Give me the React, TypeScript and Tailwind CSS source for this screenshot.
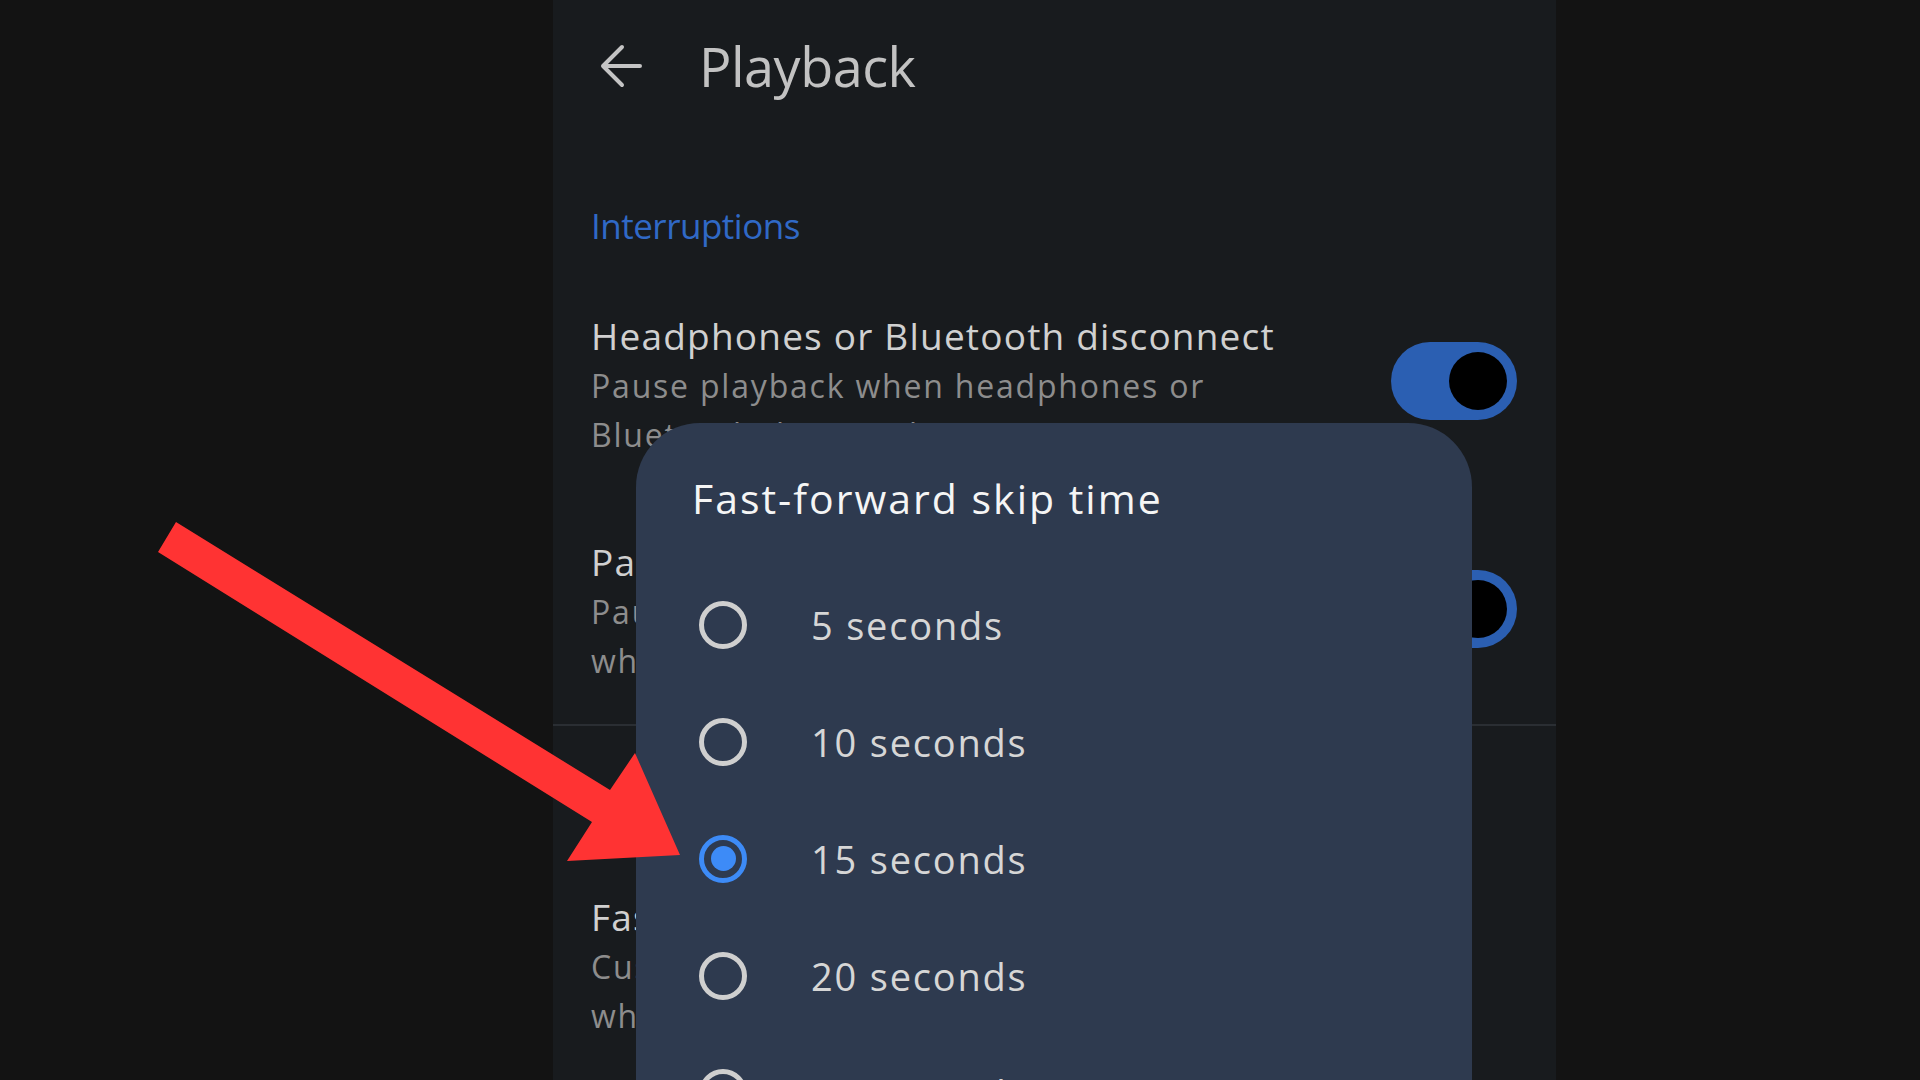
import React from "react";

function Toggle({ mt }: { mt: string }) {
  return (
    <div className={`${mt} shrink-0 w-[126px] h-[78px] rounded-full bg-[#2b5fb2] flex items-center justify-end pr-[10px]`}>
      <div className="w-[58px] h-[58px] rounded-full bg-black" />
    </div>
  );
}

function Setting({
  title,
  lines,
  className,
  toggle,
  toggleMt,
}: {
  title: string;
  lines: string[];
  className: string;
  toggle?: boolean;
  toggleMt?: string;
}) {
  return (
    <div className={`${className} flex justify-between`}>
      <div className="flex flex-col">
        <div className="text-[37px] leading-[50px] text-[#d0d0d0] tracking-[1.2px] whitespace-nowrap">{title}</div>
        {lines.map((l) => (
          <div key={l} className="text-[32px] leading-[49px] text-[#8d8d8d] tracking-[1.8px] whitespace-nowrap">
            {l}
          </div>
        ))}
      </div>
      {toggle ? <Toggle mt={toggleMt ?? "mt-[31px]"} /> : null}
    </div>
  );
}

function Radio({ selected }: { selected?: boolean }) {
  if (selected) {
    return (
      <div className="w-[48px] h-[48px] rounded-full border-[5px] border-[#3d8bf7] flex items-center justify-center shrink-0">
        <div className="w-[25px] h-[25px] rounded-full bg-[#3d8bf7]" />
      </div>
    );
  }
  return <div className="w-[48px] h-[48px] rounded-full border-[5px] border-[#cfcfcf] shrink-0" />;
}

export default function App() {
  const options = [
    { label: "5 seconds", selected: false },
    { label: "10 seconds", selected: false },
    { label: "15 seconds", selected: true },
    { label: "20 seconds", selected: false },
    { label: "30 seconds", selected: false },
  ];
  return (
    <div className="relative w-[1920px] h-[1080px] bg-[#131313] overflow-hidden flex font-['Open_Sans',sans-serif]">
      <div className="w-[553px] shrink-0" />
      <div className="relative w-[1003px] h-full shrink-0 bg-[#181b1e] overflow-hidden">
        {/* Header */}
        <div className="h-[132px] flex items-center">
          <svg className="ml-[46px] shrink-0" width="44" height="44" viewBox="0 0 44 44" fill="none">
            <path d="M41 22H4M23 3L4 22L23 41" stroke="#c4c4c4" strokeWidth="4" strokeLinecap="round" strokeLinejoin="round" />
          </svg>
          <div className="ml-[56px] text-[54px] leading-[66px] text-[#c2c2c2] tracking-[-0.5px]">Playback</div>
        </div>

        <div className="pl-[38px] pr-[39px]">
          <div className="mt-[70px] text-[35px] leading-[48px] text-[#3069c6] tracking-[-0.5px]">Interruptions</div>

          <Setting
            className="mt-[61px]"
            title="Headphones or Bluetooth disconnect"
            lines={["Pause playback when headphones or", "Bluetooth devices disconnect"]}
            toggle
            toggleMt="mt-[31px]"
          />
          <Setting
            className="mt-[78px]"
            title="Pause for notifications"
            lines={["Pause playback instead of lowering", "when notifications arrive"]}
            toggle
            toggleMt="mt-[33px]"
          />
        </div>

        <div className="mt-[39px] h-[2px] bg-[#2a2e33]" />

        <div className="pl-[38px] pr-[39px]">
          <Setting
            className="mt-[166px]"
            title="Fast-forward skip time"
            lines={["Customize how far playback skips", "when fast-forwarding"]}
          />
        </div>

        {/* Dialog */}
        <div className="absolute left-[83px] top-[423px] w-[836px] h-[720px] rounded-t-[64px] bg-[#2e3a4f]">
          <div className="pt-[47px] pl-[56px] text-[41px] leading-[56px] text-[#f5f5f5] tracking-[2px]">
            Fast-forward skip time
          </div>
          <div className="mt-[40px] flex flex-col">
            {options.map((o) => (
              <div key={o.label} className="h-[117px] flex items-center pl-[63px]">
                <Radio selected={o.selected} />
                <div className="ml-[64px] text-[38px] leading-[50px] text-[#d6d6d6] tracking-[1.8px]">{o.label}</div>
              </div>
            ))}
          </div>
        </div>
      </div>

      {/* Red annotation arrow */}
      <svg className="absolute inset-0 pointer-events-none" width="1920" height="1080" viewBox="0 0 1920 1080">
        <polygon points="176,522 158,552 592,822 567,861 680,855 635,753 610,790" fill="#ff3333" />
      </svg>
    </div>
  );
}
